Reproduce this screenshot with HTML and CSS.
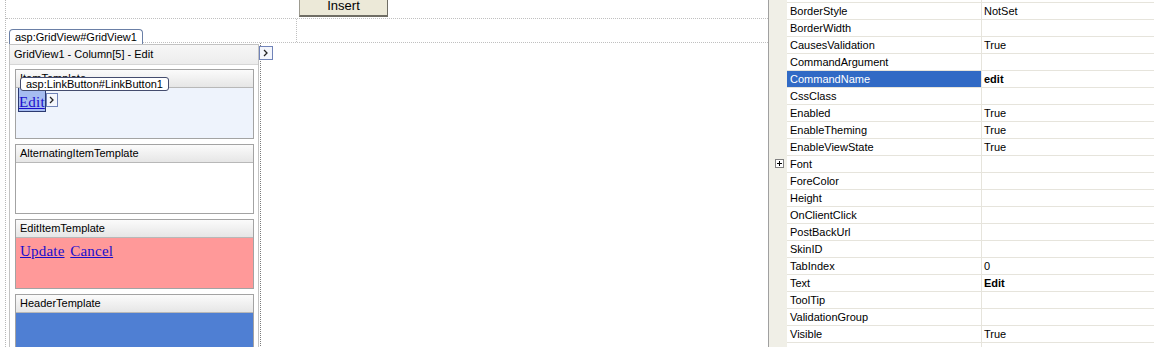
FILE: index.html
```
<!DOCTYPE html>
<html>
<head>
<meta charset="utf-8">
<link rel="stylesheet" href="styles.css">
</head>
<body>
<div class="designer">
  <div class="surface">
    <div class="row1"><div class="btn">Insert</div></div>
    <div class="row2"><div class="cell"></div></div>
    <div class="gvwrap">
      <div class="panel">
        <div class="phead">GridView1 - Column[5] - Edit</div>
        <div class="pbody">
          <div class="tbox">
            <div class="thead">ItemTemplate</div>
            <div class="tbody item"><div class="editsel"><span class="lnk">Edit</span></div></div>
          </div>
          <div class="tbox">
            <div class="thead">AlternatingItemTemplate</div>
            <div class="tbody"></div>
          </div>
          <div class="tbox">
            <div class="thead">EditItemTemplate</div>
            <div class="tbody edit"><span class="lnk">Update</span> <span class="lnk">Cancel</span></div>
          </div>
          <div class="tbox">
            <div class="thead">HeaderTemplate</div>
            <div class="tbody header"></div>
          </div>
        </div>
      </div>
    </div>
  </div>
  <div class="tag gvtag">asp:GridView#GridView1</div>
  <div class="smart gvsmart"><svg width="12" height="12" viewBox="0 0 12 12"><polyline points="4,3 7,6 4,9" fill="none" stroke="#222" stroke-width="1.3"/></svg></div>
  <div class="tag lbtag">asp:LinkButton#LinkButton1</div>
  <div class="smart lbsmart"><svg width="10" height="12" viewBox="0 0 10 12"><polyline points="3,3 6,6 3,9" fill="none" stroke="#222" stroke-width="1.3"/></svg></div>
</div>
<div class="props">
  <div class="pg">
    <div class="st sp"></div><div class="nm sp"></div><div class="vl sp"></div>
    <div class="st"></div><div class="nm">BorderStyle</div><div class="vl">NotSet</div>
    <div class="st"></div><div class="nm">BorderWidth</div><div class="vl"></div>
    <div class="st"></div><div class="nm">CausesValidation</div><div class="vl">True</div>
    <div class="st"></div><div class="nm">CommandArgument</div><div class="vl"></div>
    <div class="st"></div><div class="nm sel">CommandName</div><div class="vl b">edit</div>
    <div class="st"></div><div class="nm">CssClass</div><div class="vl"></div>
    <div class="st"></div><div class="nm">Enabled</div><div class="vl">True</div>
    <div class="st"></div><div class="nm">EnableTheming</div><div class="vl">True</div>
    <div class="st"></div><div class="nm">EnableViewState</div><div class="vl">True</div>
    <div class="st"><svg class="plus" width="9" height="9" viewBox="0 0 9 9"><rect x="0.5" y="0.5" width="8" height="8" fill="#fff" stroke="#808080"/><line x1="2" y1="4.5" x2="7" y2="4.5" stroke="#000"/><line x1="4.5" y1="2" x2="4.5" y2="7" stroke="#000"/></svg></div><div class="nm">Font</div><div class="vl"></div>
    <div class="st"></div><div class="nm">ForeColor</div><div class="vl"></div>
    <div class="st"></div><div class="nm">Height</div><div class="vl"></div>
    <div class="st"></div><div class="nm">OnClientClick</div><div class="vl"></div>
    <div class="st"></div><div class="nm">PostBackUrl</div><div class="vl"></div>
    <div class="st"></div><div class="nm">SkinID</div><div class="vl"></div>
    <div class="st"></div><div class="nm">TabIndex</div><div class="vl">0</div>
    <div class="st"></div><div class="nm">Text</div><div class="vl b">Edit</div>
    <div class="st"></div><div class="nm">ToolTip</div><div class="vl"></div>
    <div class="st"></div><div class="nm">ValidationGroup</div><div class="vl"></div>
    <div class="st"></div><div class="nm">Visible</div><div class="vl">True</div>
    <div class="st"></div><div class="nm">Width</div><div class="vl"></div>
  </div>
</div>
</body>
</html>
```
FILE: styles.css
```
html, body {
  margin: 0;
  padding: 0;
}
body {
  font-family: "Liberation Sans", Arial, sans-serif;
  font-size: 11px;
  color: #000;
  background: #fff;
  width: 1154px;
  height: 347px;
  overflow: hidden;
  display: flex;
}
.designer {
  position: relative;
  width: 768px;
  height: 347px;
  overflow: hidden;
  flex: none;
}
.surface {
  margin-left: 5px;
  border-left: 1px dotted #b8b8b8;
  height: 347px;
}
.row1 {
  height: 18px;
  border-bottom: 1px dotted #c0c0c0;
  overflow: hidden;
}
.btn {
  margin-left: 293px;
  margin-top: -5px;
  width: 89px;
  height: 22px;
  box-sizing: border-box;
  background: #ece9d8;
  border: 1px solid #9d9b90;
  border-right-color: #6f6d64;
  border-bottom: 2px solid #6f6d64;
  font-size: 13px;
  line-height: 20px;
  text-align: center;
}
.row2 {
  height: 23px;
  border-bottom: 1px dotted #c0c0c0;
}
.cell {
  width: 290px;
  height: 23px;
  border-right: 1px dotted #c0c0c0;
}
.gvwrap {
  margin-left: 3px;
  width: 251px;
  height: 310px;
  border-right: 1px dotted #7a7a7a;
  padding-top: 1px;
}
.panel {
  width: 250px;
  box-sizing: border-box;
  border: 1px solid #c3c3c3;
  border-bottom: none;
  background: #fff;
  height: 320px;
}
.phead {
  height: 19px;
  line-height: 19px;
  padding-left: 4px;
  background: linear-gradient(#f7f7f7, #ececec);
  border-bottom: 1px solid #d6d6d6;
}
.pbody {
  padding: 4px 4px 0 5px;
  display: flex;
  flex-direction: column;
  gap: 5px;
}
.tbox {
  width: 239px;
  box-sizing: border-box;
  border: 1px solid #a3a3a3;
  box-shadow: inset 1px 0 #d0d0d0, inset -1px 0 #d0d0d0;
}
.thead {
  height: 17px;
  line-height: 17px;
  padding-left: 4px;
  background: linear-gradient(#fbfbfb, #e6e6e6);
  border-bottom: 1px solid #b8b8b8;
}
.tbody {
  height: 50px;
  background: #fff;
}
.tbody.item {
  background: #eef3fc;
  padding-left: 2px;
}
.tbody.edit {
  background: #ff9999;
  padding: 5px 0 0 4px;
  height: 45px;
  font-family: "Liberation Serif", "Times New Roman", serif;
  font-size: 15px;
  line-height: 17px;
  word-spacing: 2px;
}
.tbody.header {
  background: #4f7fd3;
}
.lnk {
  color: #1a0dcc;
  text-decoration: underline;
  font-family: "Liberation Serif", "Times New Roman", serif;
  font-size: 15px;
  letter-spacing: 0.2px;
}
.editsel {
  width: 28px;
  height: 24px;
  box-sizing: border-box;
  background: #a6bcf0;
  border: 1px solid #2b3970;
  border-top: none;
  padding-top: 6px;
  padding-left: 0;
  line-height: 17px;
}
.tag {
  position: absolute;
  background: #fff;
  box-sizing: border-box;
  white-space: nowrap;
  padding: 0 5px;
}
.gvtag {
  left: 9px;
  top: 29px;
  height: 15px;
  line-height: 14px;
  border: 1px solid #6a7fa6;
  border-bottom: none;
  border-radius: 4px 4px 0 0;
}
.lbtag {
  left: 20px;
  top: 77px;
  height: 14px;
  line-height: 12px;
  border: 1px solid #444c6e;
  border-radius: 3px;
}
.smart {
  position: absolute;
  box-sizing: border-box;
  border: 1px solid #7083b8;
  background: #f4f6fc;
  display: flex;
  align-items: center;
  justify-content: center;
}
.gvsmart {
  left: 259px;
  top: 46px;
  width: 14px;
  height: 14px;
}
.lbsmart {
  left: 46px;
  top: 93px;
  width: 12px;
  height: 14px;
}
.props {
  flex: 1;
  border-left: 1px solid #a0a0a0;
  background: #fff;
}
.pg {
  display: grid;
  grid-template-columns: 18px 195px 1fr;
}
.st {
  background: #f0efe7;
  height: 17px;
}
.st.sp {
  height: 3px;
}
.nm, .vl {
  height: 17px;
  box-sizing: border-box;
  border-bottom: 1px solid #e6e4dc;
  line-height: 16px;
  white-space: nowrap;
  overflow: hidden;
}
.nm {
  border-right: 1px solid #e6e4dc;
  padding-left: 3px;
}
.vl {
  padding-left: 2px;
}
.nm.sp, .vl.sp {
  height: 3px;
}
.nm.sel {
  background: #316ac5;
  color: #fff;
}
.vl.b {
  font-weight: bold;
}
.plus {
  display: block;
  margin: 3px 0 0 6px;
}
```
